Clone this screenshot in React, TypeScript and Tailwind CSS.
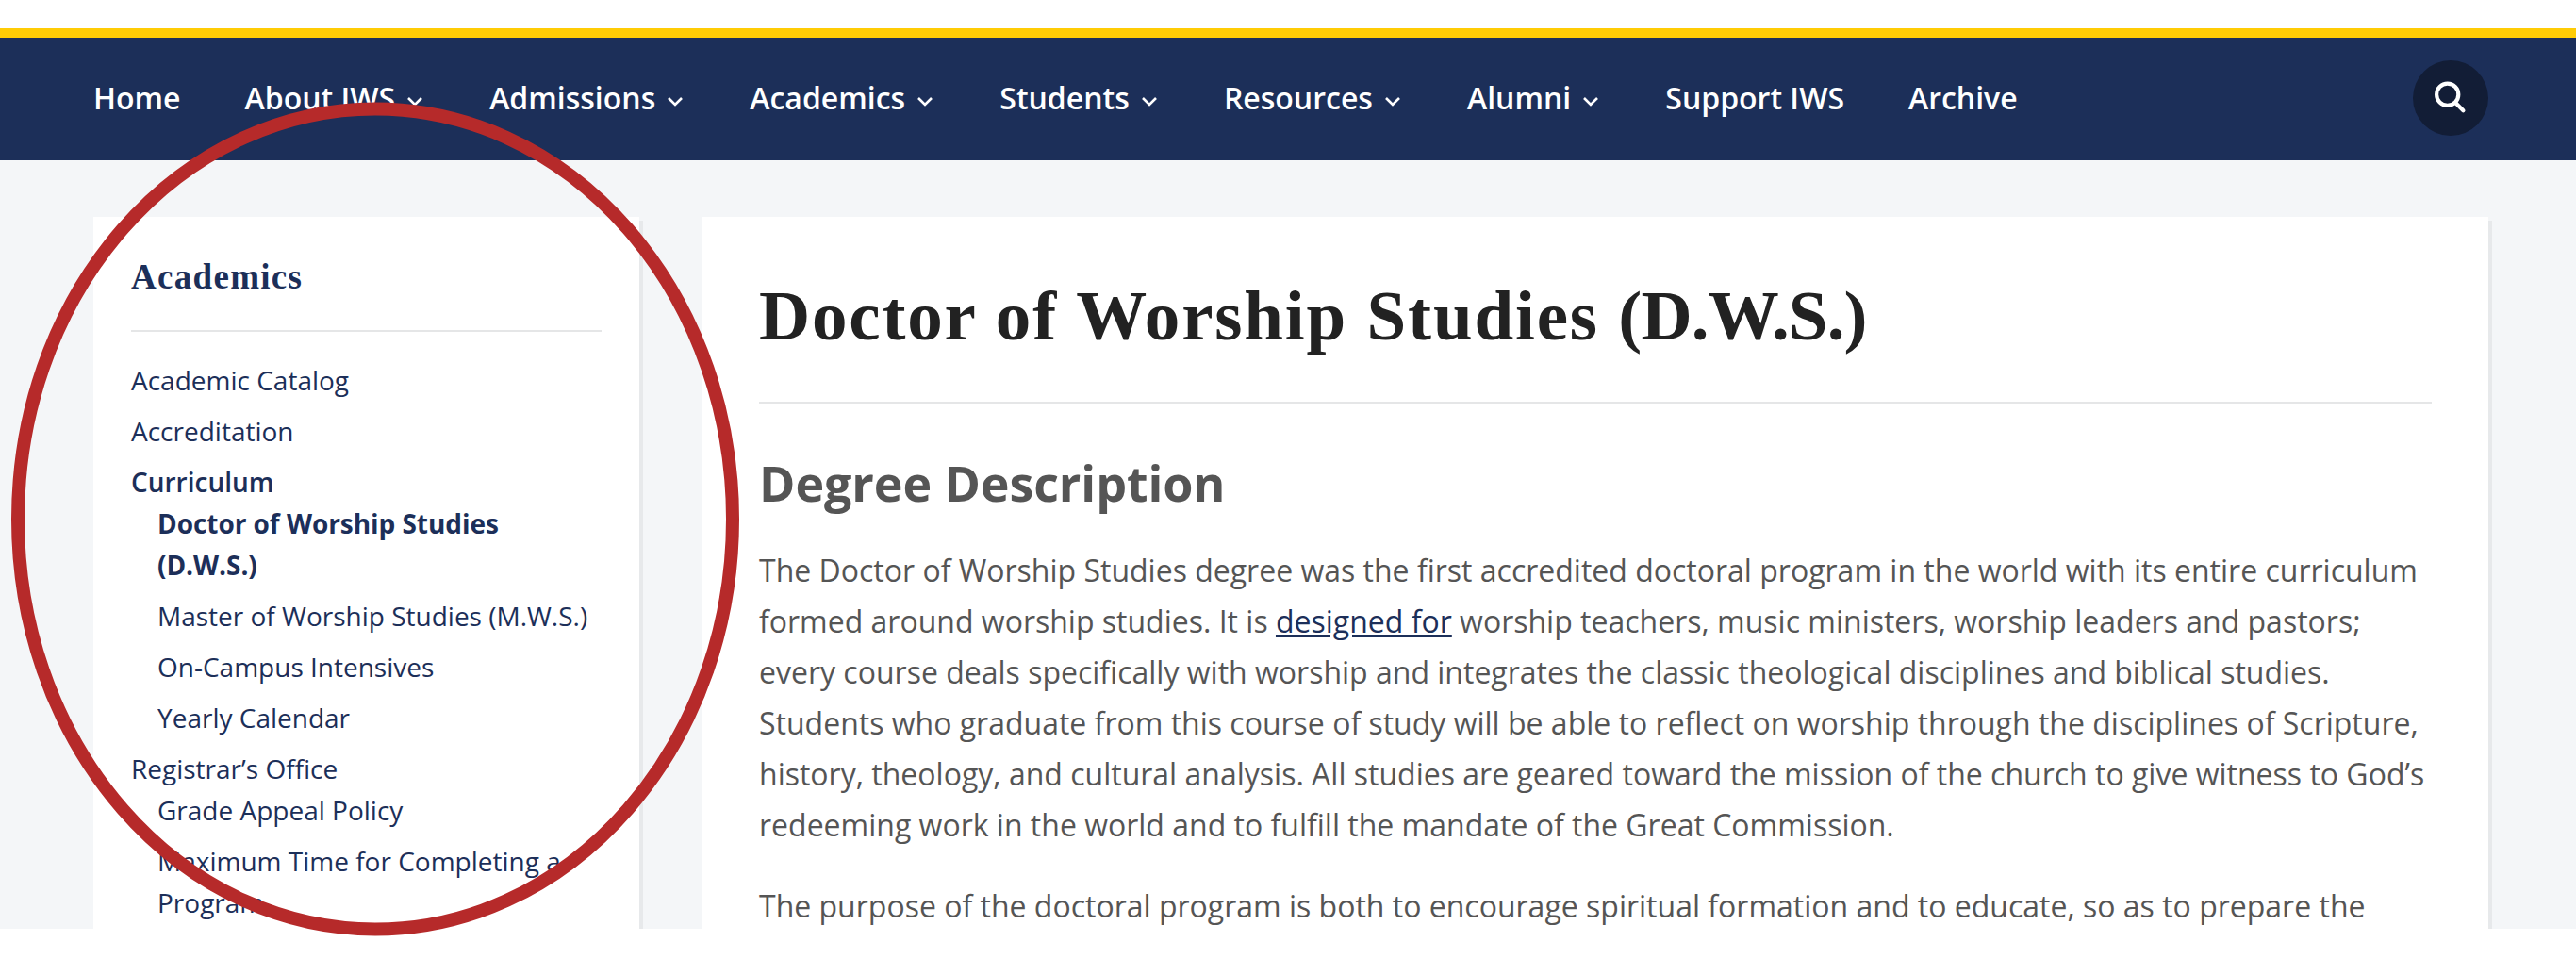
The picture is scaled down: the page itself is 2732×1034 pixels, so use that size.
import { Fragment } from "react";

const navItems = [
  { label: "Home" },
  { label: "About IWS", menu: true },
  { label: "Admissions", menu: true },
  { label: "Academics", menu: true },
  { label: "Students", menu: true },
  { label: "Resources", menu: true },
  { label: "Alumni", menu: true },
  { label: "Support IWS" },
  { label: "Archive" },
];

type Page = { title: string; state?: "parent" | "current"; children?: Page[] };

const pages: Page[] = [
  { title: "Academic Catalog" },
  { title: "Accreditation" },
  {
    title: "Curriculum",
    state: "parent",
    children: [
      { title: "Doctor of Worship Studies (D.W.S.)", state: "current" },
      { title: "Master of Worship Studies (M.W.S.)" },
      { title: "On-Campus Intensives" },
      { title: "Yearly Calendar" },
    ],
  },
  {
    title: "Registrar’s Office",
    children: [
      { title: "Grade Appeal Policy" },
      { title: "Maximum Time for Completing a Program" },
    ],
  },
];

const intro = [
  "every course deals specifically with worship and integrates the classic theological disciplines and biblical studies.",
  "Students who graduate from this course of study will be able to reflect on worship through the disciplines of Scripture,",
  "history, theology, and cultural analysis. All studies are geared toward the mission of the church to give witness to God’s",
  "redeeming work in the world and to fulfill the mandate of the Great Commission.",
];

function Chevron() {
  return (
    <svg className="mt-2 mr-[3.1px] ml-[13px] h-3 w-4" viewBox="0 0 16 12" fill="none" stroke="currentColor" strokeWidth="2.6">
      <path d="M1 2 8 9 15 2" />
    </svg>
  );
}

function Header() {
  return (
    <header className="flex h-[140px] items-center justify-between border-t-[10px] border-[#ffcc05] bg-[#1c2f59] pr-[93px] pl-[99px] text-white">
      <nav className="mb-0.5 flex text-[32px] leading-[44px] font-semibold">
        {navItems.map((item) => (
          <a key={item.label} href="#" className="mr-[68px] flex items-center whitespace-nowrap">
            {item.label}
            {item.menu && <Chevron />}
          </a>
        ))}
      </nav>
      <button className="mb-0.5 flex size-20 items-center justify-center rounded-full bg-[#121d36]">
        <svg className="size-9" viewBox="0 0 36 36" fill="none" stroke="currentColor" strokeWidth="4.2" strokeLinecap="round">
          <circle cx="14.7" cy="14.3" r="11.6" />
          <path d="M23.2 23 31.4 31.2" />
        </svg>
      </button>
    </header>
  );
}

function PageList({ items }: { items: Page[] }) {
  return (
    <ul className="space-y-2.5">
      {items.map((page) => (
        <li key={page.title}>
          <a
            href="#"
            className={
              page.state === "current"
                ? "block font-bold tracking-[-0.05px]"
                : page.state === "parent"
                  ? "block font-semibold"
                  : "block"
            }
          >
            {page.title}
          </a>
          {page.children && (
            <div className="pl-7">
              <PageList items={page.children} />
            </div>
          )}
        </li>
      ))}
    </ul>
  );
}

export default function App() {
  return (
    <div className="relative h-[1034px] w-[2732px] overflow-hidden bg-white pt-[30px] font-['Open_Sans',sans-serif]">
      <Header />

      <div className="flex h-[815px] items-stretch gap-[67px] overflow-hidden bg-[#f4f6f8] pt-[60px] pl-[99px]">
        <aside className="w-[579px] shrink-0 bg-white px-10 pt-10 text-[28px] leading-[44px] text-[#1c2f59] shadow-[4px_4px_0_#e7e9eb]">
          <h3 className="mb-[29px] h-[82px] border-b-2 border-[#e5e6e7] font-['Liberation_Serif',serif] text-[37px] leading-[48px] font-bold tracking-[1.3px]">
            Academics
          </h3>
          <PageList items={pages} />
        </aside>

        <main className="w-[1894px] shrink-0 bg-white px-[60px] pt-[60px] text-[32px] leading-[54px] text-[#555] shadow-[4px_4px_0_#e7e9eb]">
          <h1 className="mb-12 h-[138px] border-b-2 border-[#e5e6e7] font-['Liberation_Serif',serif] text-[75px] leading-[90px] font-bold tracking-[1.82px] whitespace-nowrap text-[#222]">
            Doctor of Worship Studies <span className="tracking-[-0.85px]">(D.W.S.)</span>
          </h1>
          <h2 className="mb-[30px] text-[52px] leading-[72px] font-bold tracking-[-0.1px]">Degree Description</h2>
          <p className="mb-8 whitespace-nowrap">
            The Doctor of Worship Studies degree was the first accredited doctoral program in the world with its entire curriculum
            <br />
            formed around worship studies. It is{" "}
            <a href="#" className="text-[#1c2f59] underline">
              designed for
            </a>{" "}
            worship teachers, music ministers, worship leaders and pastors;
            {intro.map((line) => (
              <Fragment key={line}>
                <br />
                {line}
              </Fragment>
            ))}
          </p>
          <p className="whitespace-nowrap">
            The purpose of the doctoral program is both to encourage spiritual formation and to educate, so as to prepare the
          </p>
        </main>
      </div>

      {/* hand-drawn style highlight around the sidebar */}
      <svg className="absolute top-[100px] left-0 h-[900px] w-[800px]" viewBox="0 0 800 900" fill="none">
        <ellipse cx="398" cy="450.5" rx="379" ry="435" stroke="#b62a2a" strokeWidth="14" />
      </svg>
    </div>
  );
}
